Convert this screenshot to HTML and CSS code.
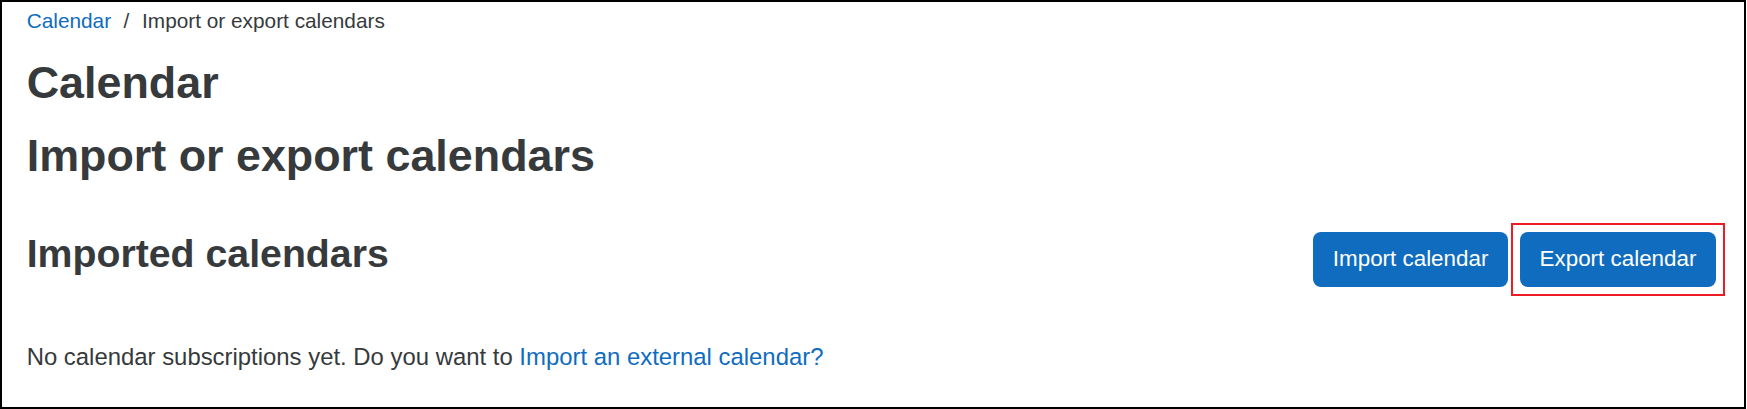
FILE: index.html
```html
<!DOCTYPE html>
<html lang="en">
<head>
<meta charset="utf-8">
<title>Import or export calendars</title>
<link rel="stylesheet" href="styles.css">
</head>
<body>
<div class="page">
  <nav class="breadcrumb">
    <a href="#" class="crumb-link">Calendar</a>
    <span class="crumb-sep">/</span>
    <span class="crumb-current">Import or export calendars</span>
  </nav>
  <h1 class="page-title">Calendar</h1>
  <h2 class="section-title">Import or export calendars</h2>
  <div class="subs-row">
    <h3 class="subs-title">Imported calendars</h3>
    <div class="actions">
      <button class="btn">Import calendar</button>
      <span class="highlight"><button class="btn">Export calendar</button></span>
    </div>
  </div>
  <p class="empty">No calendar subscriptions yet. Do you want to <a href="#" class="link">Import an external calendar?</a></p>
</div>
</body>
</html>
```
FILE: styles.css
```css
html, body {
  margin: 0;
  padding: 0;
  background: #fff;
}
body {
  font-family: "Liberation Sans", Arial, sans-serif;
  color: #373a3c;
}
.page {
  box-sizing: border-box;
  width: 1746px;
  height: 409px;
  border: 2px solid #000;
  padding: 4px 19px 0 24.7px;
  overflow: hidden;
}
.breadcrumb {
  display: flex;
  align-items: baseline;
  font-size: 20.8px;
  line-height: 30px;
}
.crumb-link {
  color: #0f6cbf;
  text-decoration: none;
}
.crumb-sep {
  padding: 0 12.8px 0 12.4px;
  color: #373a3c;
}
.crumb-current {
  color: #373a3c;
}
.page-title,
.section-title {
  font-size: 44.85px;
  line-height: 53.4px;
  font-weight: bold;
  margin: 0;
}
.page-title {
  margin-top: 20px;
}
.section-title {
  margin-top: 19.5px;
}
.subs-row {
  display: flex;
  justify-content: space-between;
  align-items: flex-start;
  margin-top: 40.5px;
}
.subs-title {
  margin: 7.1px 0 0;
  font-size: 39.25px;
  line-height: 46.8px;
  font-weight: bold;
}
.actions {
  display: flex;
  align-items: center;
  gap: 3px;
}
.btn {
  font-family: "Liberation Sans", Arial, sans-serif;
  font-size: 22.4px;
  line-height: 54px;
  height: 55px;
  padding: 0 19.6px;
  border: 0;
  border-radius: 8px;
  background: #0f6cbf;
  color: #fff;
  display: block;
  cursor: pointer;
}
.highlight {
  display: block;
  border: 2px solid #ed1c24;
  padding: 7px;
}
.empty {
  margin: 42.8px 0 0;
  font-size: 23.9px;
  line-height: 35.85px;
}
.link {
  color: #0f6cbf;
  text-decoration: none;
}
```
